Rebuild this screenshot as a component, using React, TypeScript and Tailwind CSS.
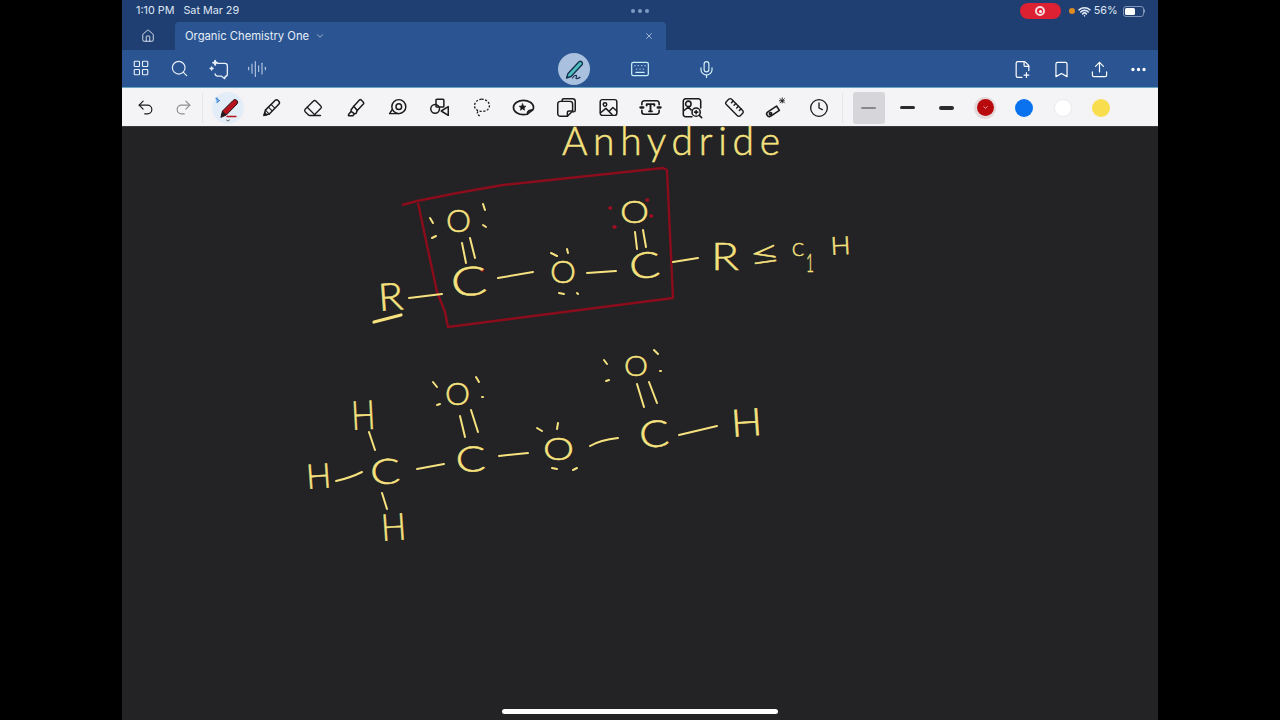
import {
  AudioLines,
  Bookmark,
  ChevronDown,
  Clock,
  Eraser,
  FilePlus2,
  House,
  Keyboard,
  LayoutGrid,
  Mic,
  MoreHorizontal,
  Redo2,
  Ruler,
  Search,
  Undo2,
  Upload,
  Wifi,
  X,
} from "lucide-react";

const ink = {
  fill: "none",
  stroke: "currentColor",
  strokeWidth: 1.7,
  strokeLinecap: "round" as const,
  strokeLinejoin: "round" as const,
};

function AiChat() {
  return (
    <svg viewBox="0 0 24 24" className="w-[21px] h-[21px]" {...ink} strokeWidth={1.5}>
      <path d="M10 5h8a3 3 0 0 1 3 3v9a3 3 0 0 1-2.500 3L18 22.500l-4-3H10a3 3 0 0 1-3-2.500" />
      <path d="M7 1.500l.8 2 2 .8-2 .8-.8 2-.8-2-2-.8 2-.8z" fill="currentColor" />
      <path d="M3 9l.5 1.300 1.300.5-1.300.5L3 12.600l-.5-1.300L1.200 10.800l1.300-.5z" fill="currentColor" />
    </svg>
  );
}

function ScribblePen() {
  return (
    <svg viewBox="0 0 32 32" className="w-[24px] h-[24px]" fill="none" strokeLinecap="round" strokeLinejoin="round">
      <path d="M8 22l-2 6 6-2L27 10a3 3 0 0 0-4-4z" fill="#4fc0bd" stroke="#14304f" strokeWidth="1.800" />
      <path d="M14 28c3-5 7-4 5-1s3 2 5 0" stroke="#14304f" strokeWidth="1.500" />
    </svg>
  );
}

function RedPen() {
  return (
    <div className="relative w-[32px] h-[32px] rounded-full bg-[#e3edf8] flex items-center justify-center">
      <svg viewBox="0 0 32 32" className="w-[32px] h-[32px]" fill="none" strokeLinecap="round" strokeLinejoin="round">
        <path d="M5 5.500v5l2.500-1.800-3.500-2.200M5 10.500l2.500-2-3.500-2" stroke="#2b7fd0" strokeWidth=".8" />
        <path d="M9 25l1.500-6L21 8.500a2.600 2.600 0 0 1 4 3.500L14.500 22.800z" fill="#b5141f" stroke="#2a1518" strokeWidth="1" />
        <path d="M9 25l1.500-6 4 3.800z" fill="#241c1e" />
        <path d="M15 24.500h9" stroke="#b5141f" strokeWidth="1.300" />
        <path d="M14.500 28l1.500 1 1.500-1" stroke="#555" strokeWidth=".9" />
      </svg>
    </div>
  );
}

function PencilTool() {
  return (
    <svg viewBox="0 0 24 24" className="w-[21px] h-[21px]" {...ink}>
      <path d="M3.500 21l1.500-6L16 4a2.500 2.500 0 0 1 3.500 0l.8.8a2.500 2.500 0 0 1 0 3.500L9.500 19.500z" />
      <path d="M5 15l4.500 4.500M8.500 11.500l4 4M11.500 8.500l4 4" strokeWidth="1.200" />
      <path d="M3.500 21l.8-3 2.200 2.200z" fill="currentColor" />
    </svg>
  );
}

function Marker() {
  return (
    <svg viewBox="0 0 24 24" className="w-[21px] h-[21px]" {...ink}>
      <path d="M10 10.500L16.500 3.500a1.500 1.500 0 0 1 2.100 0l2.400 2.400a1.500 1.500 0 0 1 0 2.100L14 15.500z" />
      <path d="M10 10.500L7 14.500v2L4 20v1.500h5l2-2.500h1.500l1.500-3.500" />
      <path d="M7 16.500l3.500 2.500" />
    </svg>
  );
}

function Tape() {
  return (
    <svg viewBox="0 0 24 24" className="w-[21px] h-[21px]" {...ink}>
      <circle cx="13.500" cy="11" r="8" />
      <circle cx="13.500" cy="11" r="3.200" />
      <path d="M13.500 19H3l2.500-4" />
    </svg>
  );
}

function Shapes() {
  return (
    <svg viewBox="0 0 24 24" className="w-[21px] h-[21px]" {...ink}>
      <rect x="8" y="2.500" width="9" height="9" rx="1" />
      <circle cx="7" cy="13.500" r="5" />
      <path d="M22 11v10l-8-5z" />
    </svg>
  );
}

function Lasso() {
  return (
    <svg viewBox="0 0 24 24" className="w-[21px] h-[21px]" {...ink} strokeLinecap="butt" strokeWidth={1.500} strokeDasharray="2.400 1.800">
      <path d="M12 2.500c5 0 9 3 9 7.500s-4 6.500-8 6.500c-5 0-9-2.500-9-6.500s4-7.500 8-7.500zM8 16.500c-2 2 0 4 3 6" />
    </svg>
  );
}

function StarSticker() {
  return (
    <svg viewBox="0 0 24 24" className="w-[23px] h-[23px]" {...ink}>
      <path d="M16 19c-1 .2-3 .5-4 .5-5 0-10.500-3-10.500-7.500S7 4.500 12 4.500 22.500 7.500 22.500 12c0 1-.5 2-1.200 2.800z" />
      <path d="M16 19c0-3 2-4.500 5.300-4.200" />
      <path d="M11 8l1.100 2.400 2.500.3-1.900 1.700.5 2.500-2.200-1.300-2.200 1.300.5-2.500-1.900-1.700 2.500-.3z" fill="currentColor" strokeWidth=".6" />
    </svg>
  );
}

function Sticky() {
  return (
    <svg viewBox="0 0 24 24" className="w-[21px] h-[21px]" {...ink}>
      <path d="M7 5V4a2 2 0 0 1 2-2h10a3 3 0 0 1 3 3v10a2 2 0 0 1-2 2h-1" />
      <path d="M5 5h11a3 3 0 0 1 3 3v8l-6 6H5a3 3 0 0 1-3-3V8a3 3 0 0 1 3-3z" />
      <path d="M13 22v-4a2 2 0 0 1 2-2h4" />
    </svg>
  );
}

function Photo() {
  return (
    <svg viewBox="0 0 24 24" className="w-[21px] h-[21px]" {...ink}>
      <rect x="2.500" y="3" width="19" height="18" rx="2.500" />
      <circle cx="8" cy="8.500" r="2" />
      <path d="M3 18l6-5 7 7M13 16l4-4 4.500 4" />
    </svg>
  );
}

function TextBox() {
  return (
    <svg viewBox="0 0 24 24" className="w-[23px] h-[23px]" {...ink}>
      <path d="M3 9V7.500A2.500 2.500 0 0 1 5.500 5h13A2.500 2.500 0 0 1 21 7.500V9M3 15v1.500A2.500 2.500 0 0 0 5.500 19h13a2.500 2.500 0 0 0 2.500-2.500V15" />
      <path d="M1.500 12h3M19.500 12h3" strokeWidth="2.400" />
      <path d="M8 10V8.500h8V10M12 8.500v7.500M10.500 16h3" strokeWidth="2" />
    </svg>
  );
}

function PhotoSearch() {
  return (
    <svg viewBox="0 0 24 24" className="w-[22px] h-[22px]" {...ink}>
      <path d="M12 21.500H5a2.500 2.500 0 0 1-2.500-2.500V4.500A2.500 2.500 0 0 1 5 2h14a2.500 2.500 0 0 1 2.500 2.500V12" />
      <circle cx="8" cy="7.500" r="3" />
      <path d="M3 15l5-4 3 3" />
      <circle cx="16.500" cy="16.500" r="4.500" />
      <path d="M20 20l2.500 2.500M14.800 16.500h3.400M16.500 14.800v3.400" />
    </svg>
  );
}

function Laser() {
  return (
    <svg viewBox="0 0 24 24" className="w-[23px] h-[23px]" {...ink}>
      <path d="M3 16.500l9-6 3 4.500-9 6a2.700 2.700 0 0 1-3-4.500z" />
      <circle cx="5.800" cy="18.500" r="1.200" />
      <path d="M18 2v6M15 5h6M15.800 2.800l4.400 4.400M20.200 2.800l-4.400 4.400" strokeWidth="1" strokeDasharray="1.200 .8" />
    </svg>
  );
}

function Battery() {
  return (
    <div className="flex items-center">
      <div className="w-[21px] h-[11px] rounded-[3px] border border-[#7f95b8] p-[1px]">
        <div className="w-[10px] h-full rounded-[1.500px] bg-white" />
      </div>
      <div className="w-[1.500px] h-[4px] rounded-r bg-[#7f95b8]" />
    </div>
  );
}

const drawTools = [
  <PencilTool key="pencil" />,
  <Eraser key="eraser" className="w-[20px] h-[20px]" strokeWidth={1.600} />,
  <Marker key="marker" />,
  <Tape key="tape" />,
  <Shapes key="shapes" />,
  <Lasso key="lasso" />,
  <StarSticker key="star" />,
  <Sticky key="sticky" />,
  <Photo key="photo" />,
  <TextBox key="text" />,
  <PhotoSearch key="search" />,
  <Ruler key="ruler" className="w-[21px] h-[21px]" strokeWidth={1.600} />,
  <Laser key="laser" />,
  <Clock key="clock" className="w-[20px] h-[20px]" strokeWidth={1.600} />,
];

// letters of the handwriting: left edge, baseline, width, font size, rotation
const letters: [string, number, number, number, number, number?][] = [
  ["R", 379, 311, 25, 38, -4],
  ["C", 452, 297, 36, 40, -5],
  ["O", 446, 232, 25, 31],
  ["O", 550, 283, 26, 32],
  ["C", 630, 279, 31, 36, -4],
  ["O", 620, 223, 29, 32],
  ["R", 711, 270, 28, 38],
  ["≤", 750, 266, 32, 32, -8],
  ["C", 792, 256, 12, 17],
  ["1", 806, 272, 8, 25],
  ["H", 831, 255, 20, 25, -3],
  ["H", 352, 430, 24, 40, -3],
  ["H", 307, 489, 25, 34, -4],
  ["C", 371, 485, 30, 35, -4],
  ["H", 382, 541, 25, 37, -4],
  ["C", 456, 472, 30, 35, -2],
  ["O", 445, 405, 25, 32],
  ["O", 624, 376, 24, 28],
  ["O", 543, 460, 31, 31],
  ["C", 640, 448, 30, 37, -4],
  ["H", 732, 437, 31, 38, -4],
];

const yellowStrokes = [
  "M409 298L442 294", "M498 278L533 272", "M587 273L616 271", "M673 262L698 258",
  "M462 243L466 263", "M470 238L475 258", "M635 232L637 249", "M643 230L646 247",
  "M430 218L433 223", "M432 238L436 236", "M483 204L485 210", "M483 225L486 227",
  "M551 253L557 256", "M567 249L568 253", "M559 293L564 294", "M577 293L578 294",
  "M369 432L375 450", "M336 481Q350 478 362 472", "M382 493L387 509", "M417 469L444 464",
  "M499 456L528 453", "M460 416L465 437", "M471 410L478 432",
  "M433 382L437 387", "M437 405L440 404", "M476 377L479 382", "M482 397L483 397",
  "M590 446Q600 440 618 438", "M679 435L717 426", "M637 384L644 407", "M649 382L657 403",
  "M604 360L607 364", "M606 381L609 380", "M654 350L658 354", "M660 371L661 371",
  "M537 428L542 431", "M558 423L557 429", "M552 468L557 469", "M573 470L577 468",
];

function Ink() {
  return (
    <svg viewBox="122 127 1036 593" className="block w-full h-full overflow-visible">
      <path
        d="M402 205L417 201Q460 192 503 185L663 168L667 170L673 298L448 327L445 312L437 292L418 203"
        fill="none"
        stroke="#8b0d1c"
        strokeWidth="2.400"
        strokeLinejoin="round"
      />
      <g fill="none" stroke="#a01020" strokeWidth="3.500" strokeLinecap="round">
        <path d="M610 208h.5M614 227h1M647 200h.5M651 216h.5M482 270h.5" />
      </g>
      <g fill="none" stroke="#f6e27f" strokeWidth="2" strokeLinecap="round">
        {yellowStrokes.map((d) => (
          <path key={d} d={d} />
        ))}
      </g>
      <path d="M374 322L401 315" stroke="#f6e27f" strokeWidth="3.200" strokeLinecap="round" />
      <g fill="#f6e27f" stroke="#f6e27f" strokeWidth=".5" className="font-['Lato'] font-light">
        <text x="562" y="155" fontSize="39" textLength="218" lengthAdjust="spacing">
          Anhydride
        </text>
        {letters.map(([t, x, y, w, size, rot], i) => (
          <text
            key={i}
            x={x}
            y={y}
            fontSize={size}
            textLength={w}
            lengthAdjust="spacingAndGlyphs"
            transform={rot ? `rotate(${rot} ${x} ${y})` : undefined}
          >
            {t}
          </text>
        ))}
      </g>
    </svg>
  );
}

export default function App() {
  return (
    <div className="w-[1280px] h-[720px] bg-black flex justify-center overflow-hidden font-['Inter',sans-serif]">
      <div className="relative w-[1036px] h-full flex flex-col">
        {/* status bar */}
        <div className="h-[22px] bg-[#1f3f72] grid grid-cols-3 items-center text-[#dfe7f3] text-[10.800px]">
          <div className="flex items-center gap-[9px] pl-[14px]">
            <span>1:10 PM</span>
            <span>Sat Mar 29</span>
          </div>
          <div className="flex justify-center gap-[3px]">
            <span className="w-[4px] h-[4px] rounded-full bg-[#7f9bc6]" />
            <span className="w-[4px] h-[4px] rounded-full bg-[#7f9bc6]" />
            <span className="w-[4px] h-[4px] rounded-full bg-[#7f9bc6]" />
          </div>
          <div className="flex items-center justify-end pr-[13px]">
            <div className="w-[41px] h-[16px] rounded-full bg-[#dd2133] flex items-center justify-center mr-[8px]">
              <div className="w-[10px] h-[10px] rounded-full border-2 border-[#f7d9dc] flex items-center justify-center">
                <div className="w-[3px] h-[3px] rounded-full bg-white" />
              </div>
            </div>
            <span className="w-[6px] h-[6px] rounded-full bg-[#dd8b22] mr-[3px]" />
            <Wifi className="w-[13px] h-[13px] mr-[3px]" strokeWidth={3} />
            <span className="mr-[5px]">56%</span>
            <Battery />
          </div>
        </div>

        {/* tabs */}
        <div className="h-[28px] bg-[#1f3f72] flex text-[#e6edf7]">
          <div className="w-[53px] flex items-center justify-center pr-[1px]">
            <House className="w-[14px] h-[14px]" strokeWidth={1.500} />
          </div>
          <div className="w-[491px] bg-[#2a5592] rounded-t-[4px] flex items-center pl-[10px] pr-[12px] text-[11.250px]">
            <span>Organic Chemistry One</span>
            <ChevronDown className="w-[10px] h-[10px] ml-[6px]" strokeWidth={1.500} />
            <X className="w-[10px] h-[10px] ml-auto" strokeWidth={1.500} />
          </div>
        </div>

        {/* app toolbar */}
        <div className="h-[38px] pt-[1px] bg-[#2a5592] grid grid-cols-[1fr_auto_1fr] items-center text-white border-b border-[#6aa6c4]">
          <div className="flex text-[#e9eff8]">
            <div className="w-[38px] flex justify-center">
              <LayoutGrid className="w-[18px] h-[18px]" strokeWidth={1.500} />
            </div>
            <div className="w-[39.500px] flex justify-center">
              <Search className="w-[19px] h-[19px]" strokeWidth={1.500} />
            </div>
            <div className="w-[39px] flex justify-center">
              <AiChat />
            </div>
            <div className="w-[37px] flex justify-center">
              <AudioLines className="w-[20px] h-[20px] text-[#b9cbe4]" strokeWidth={1.300} />
            </div>
          </div>
          <div className="flex items-center">
            <div className="w-[66px] flex justify-center">
              <div className="w-[32px] h-[32px] rounded-full bg-[#a9c1de] flex items-center justify-center">
                <ScribblePen />
              </div>
            </div>
            <div className="w-[67px] flex justify-center">
              <Keyboard className="w-[20px] h-[20px] text-[#c5eef5]" strokeWidth={1.500} />
            </div>
            <div className="w-[66px] flex justify-center">
              <Mic className="w-[19px] h-[19px] text-[#d5f0f5]" strokeWidth={1.500} />
            </div>
          </div>
          <div className="flex justify-end">
            <div className="w-[39px] flex justify-center">
              <FilePlus2 className="w-[19px] h-[19px]" strokeWidth={1.500} />
            </div>
            <div className="w-[38px] flex justify-center">
              <Bookmark className="w-[19px] h-[19px]" strokeWidth={1.500} />
            </div>
            <div className="w-[39px] flex justify-center">
              <Upload className="w-[19px] h-[19px]" strokeWidth={1.500} />
            </div>
            <div className="w-[39px] flex justify-center">
              <MoreHorizontal className="w-[19px] h-[19px]" strokeWidth={2.200} />
            </div>
          </div>
        </div>

        {/* drawing tools */}
        <div className="h-[39px] pt-[1px] bg-[#f4f3f5] flex items-center text-[#1b1b1d] border-b border-[#3a393c]">
          <div className="flex items-center pl-[4px] w-[80px]">
            <div className="w-[38px] flex justify-center">
              <Undo2 className="w-[19px] h-[19px]" strokeWidth={1.500} />
            </div>
            <div className="w-[38px] flex justify-center">
              <Redo2 className="w-[19px] h-[19px] text-[#8d8d90]" strokeWidth={1.500} />
            </div>
          </div>
          <div className="w-[1px] h-[30px] bg-[#e6e5e8] mr-[9px]" />
          <RedPen />
          <div className="flex items-center ml-[6px]">
            {drawTools.map((tool, i) => (
              <div key={i} className="w-[42.150px] flex justify-center">
                {tool}
              </div>
            ))}
          </div>
          <div className="w-[1px] h-[30px] bg-[#e6e5e8] ml-[2px] mr-[10px]" />
          <div className="flex items-center">
            <div className="w-[32px] h-[32px] rounded-[3px] bg-[#d6d5d9] flex items-center justify-center">
              <div className="w-[15px] h-[2px] rounded-full bg-[#88878c]" />
            </div>
            <div className="w-[39px] ml-[3px] flex justify-center">
              <div className="w-[15px] h-[2.500px] rounded-full bg-[#2b2b2e]" />
            </div>
            <div className="w-[39px] flex justify-center">
              <div className="w-[15px] h-[4px] rounded-full bg-[#2b2b2e]" />
            </div>
          </div>
          <div className="flex items-center">
            <div className="w-[38.700px] flex justify-center">
              <div className="w-[22px] h-[22px] rounded-full bg-[#e5dadb] flex items-center justify-center">
                <div className="w-[17px] h-[17px] rounded-full bg-[#b80a0d] flex items-center justify-center">
                  <ChevronDown className="w-[7px] h-[7px] text-[#f3d5d5]" strokeWidth={2.500} />
                </div>
              </div>
            </div>
            <div className="w-[38.700px] flex justify-center">
              <div className="w-[18px] h-[18px] rounded-full bg-[#0a72ee]" />
            </div>
            <div className="w-[38.700px] flex justify-center">
              <div className="w-[18px] h-[18px] rounded-full bg-white border border-[#ebeaec]" />
            </div>
            <div className="w-[38.700px] flex justify-center">
              <div className="w-[18px] h-[18px] rounded-full bg-[#f8dd4e]" />
            </div>
          </div>
        </div>

        {/* page */}
        <div className="flex-1 min-h-0 bg-[#232225]">
          <Ink />
        </div>

        {/* home indicator */}
        <div className="absolute bottom-[6px] left-[380px] w-[276px] h-[5px] rounded-full bg-white" />
      </div>
    </div>
  );
}
